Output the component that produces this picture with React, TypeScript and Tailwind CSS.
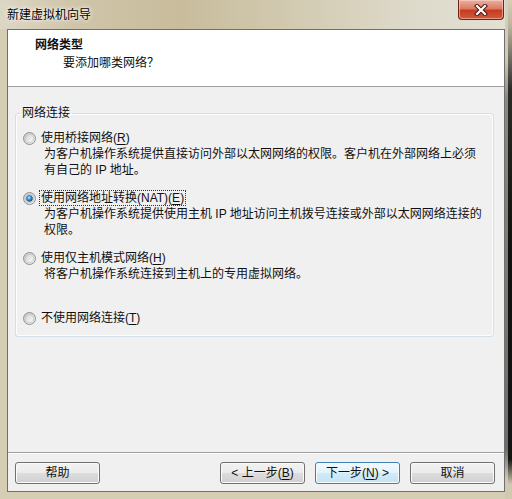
import clsx from 'clsx';

// Win7-style radio glyph
function Radio({ checked = false }: { checked?: boolean }) {
  return (
    <svg width="13" height="13" viewBox="0 0 13 13" className="shrink-0">
      <defs>
        <linearGradient id="rOuter" x1="0" y1="0" x2="1" y2="1">
          <stop offset="0" stopColor="#c9c9c9" />
          <stop offset="1" stopColor="#f4f4f4" />
        </linearGradient>
        <linearGradient id="rInner" x1="0" y1="0" x2="1" y2="1">
          <stop offset="0" stopColor="#d2d2d2" />
          <stop offset="1" stopColor="#fbfbfb" />
        </linearGradient>
        <radialGradient id="rDot" cx="0.4" cy="0.35" r="0.7">
          <stop offset="0" stopColor="#bfe9ff" />
          <stop offset="0.45" stopColor="#3f9be0" />
          <stop offset="1" stopColor="#0f4a84" />
        </radialGradient>
      </defs>
      <circle cx="6.5" cy="6.5" r="6" fill="url(#rOuter)" stroke="#8e9194" strokeWidth="1" />
      <circle cx="6.5" cy="6.5" r="4.2" fill="url(#rInner)" stroke="#b4b6b8" strokeWidth="0.6" />
      {checked && <circle cx="6.5" cy="6.5" r="3" fill="url(#rDot)" stroke="#1b4f80" strokeWidth="0.6" />}
    </svg>
  );
}

function Key({ k }: { k: string }) {
  return <span className="underline underline-offset-2">{k}</span>;
}

function Btn({ children, primary = false }: { children: React.ReactNode; primary?: boolean }) {
  return (
    <div
      className={clsx(
        'h-[22px] w-[85px] rounded-[3px] border flex items-center justify-center text-[12px] leading-none shadow-[inset_0_0_0_1px_#fbfbfb]',
        primary
          ? 'border-[#3c7fb1] bg-[linear-gradient(to_bottom,#f1f9fe_0%,#e3f3fc_50%,#d2ebf9_50%,#c3e3f6_100%)]'
          : 'border-[#707070] bg-[linear-gradient(to_bottom,#f2f2f2_0%,#ebebeb_50%,#dddddd_50%,#cfcfcf_100%)]'
      )}
    >
      {children}
    </div>
  );
}

const OPTIONS = [
  {
    label: (
      <>
        使用桥接网络(<Key k="R" />)
      </>
    ),
    lines: ['为客户机操作系统提供直接访问外部以太网网络的权限。客户机在外部网络上必须', '有自己的 IP 地址。'],
  },
  {
    label: (
      <>
        使用网络地址转换(NAT)(<Key k="E" />)
      </>
    ),
    lines: ['为客户机操作系统提供使用主机 IP 地址访问主机拨号连接或外部以太网网络连接的', '权限。'],
    checked: true,
  },
  {
    label: (
      <>
        使用仅主机模式网络(<Key k="H" />)
      </>
    ),
    lines: ['将客户机操作系统连接到主机上的专用虚拟网络。'],
  },
];

export default function App() {
  return (
    <div className="w-[512px] h-[499px] flex bg-[#d5cdb4] text-[12px] text-[#111] font-['Liberation_Sans','Noto_Sans_CJK_SC',sans-serif] overflow-hidden">
      {/* main column */}
      <div className="w-[505px] flex flex-col">
        {/* title bar */}
        <div className="h-[29px] flex justify-between items-start bg-[linear-gradient(to_right,#dcd7c5_0%,#cfc5a9_14%,#c8bc9c_36%,#d2cab1_58%,#dedacb_82%,#e2dfd3_100%)]">
          <div className="pl-[7px] pt-[7px] leading-[16px] text-black [text-shadow:0_0_6px_#fff,0_0_3px_#fff]">新建虚拟机向导</div>
          <div className="mr-[1px] w-[46px] h-[20px] rounded-b-[4px] border border-t-0 border-[#6a2518] bg-[linear-gradient(to_bottom,#eab2a4_0%,#dc7a62_45%,#c63c22_55%,#d4593b_100%)] shadow-[inset_0_0_0_1px_rgba(255,220,210,0.5)] flex items-center justify-center">
            <svg width="16" height="12" viewBox="0 0 16 12">
              <path d="M4 2 L12 10 M12 2 L4 10" stroke="#4a1a10" strokeWidth="4.2" strokeLinecap="square" />
              <path d="M4 2 L12 10 M12 2 L4 10" stroke="#ffffff" strokeWidth="2.2" strokeLinecap="square" />
            </svg>
          </div>
        </div>

        {/* client row */}
        <div className="flex pl-[7px]">
          <div className="w-[498px] h-[463px] border border-[#6f6f6f] flex flex-col bg-[#f0f0f0]">
            {/* header */}
            <div className="h-[57px] bg-white border-b border-[#a0a0a0] pt-[7px]">
              <div className="pl-[27px] leading-[16px] font-bold">网络类型</div>
              <div className="pl-[55px] mt-[2px] leading-[16px]">要添加哪类网络？</div>
            </div>

            {/* body */}
            <div className="flex-1 flex flex-col">
              <fieldset className="mt-[19px] ml-[7px] mr-[10px] border border-[#d5dfe5] rounded-[3px] shadow-[inset_0_0_0_1px_#fdfdfd] pb-[10px]">
                <legend className="ml-[4px] px-[2px] leading-[14px]">网络连接</legend>
                <div className="pt-[10px]">
                  {OPTIONS.map((o, i) => (
                    <div key={i} className="h-[60px]">
                      <div className="h-[16px] flex items-center pl-[7px]">
                        <Radio checked={o.checked} />
                        <span
                          className={clsx(
                            'ml-[3px] px-[1px] leading-[14px] border',
                            o.checked ? 'border-dotted border-[#333]' : 'border-transparent'
                          )}
                        >
                          {o.label}
                        </span>
                      </div>
                      <div className="pl-[28px]">
                        {o.lines.map((l) => (
                          <div key={l} className="leading-[16px] whitespace-nowrap">
                            {l}
                          </div>
                        ))}
                      </div>
                    </div>
                  ))}
                  <div className="h-[16px] flex items-center pl-[7px]">
                    <Radio />
                    <span className="ml-[3px] px-[1px] leading-[14px] border border-transparent">
                      不使用网络连接(<Key k="T" />)
                    </span>
                  </div>
                </div>
              </fieldset>

              <div className="flex-1" />

              {/* separator */}
              <div className="border-t border-[#a0a0a0] border-b border-b-white" />

              {/* buttons */}
              <div className="flex justify-between pl-[7px] pr-[9px] pt-[8px] pb-[7px]">
                <Btn>帮助</Btn>
                <div className="flex gap-[10px]">
                  <Btn>
                    &lt; 上一步(<Key k="B" />)
                  </Btn>
                  <Btn primary>
                    下一步(<Key k="N" />) &gt;
                  </Btn>
                  <Btn>取消</Btn>
                </div>
              </div>
            </div>
          </div>
        </div>
        <div className="h-[7px]" />
      </div>

      {/* right frame (glass over dark desktop) */}
      <div className="w-[7px] h-full flex">
        <div className="w-[3px] h-full bg-[linear-gradient(to_bottom,#d8d0b8_0%,#d0c8b0_12%,#8a877e_20%,#6e6c66_90%,#d0c8b0_96%)]" />
        <div className="w-[4px] h-full bg-[linear-gradient(to_bottom,#d6ceb6_0%,#bcb59f_5%,#2a2a28_18%,#101010_50%,#141414_92%,#d0c8b0_97%)]" />
      </div>
    </div>
  );
}
